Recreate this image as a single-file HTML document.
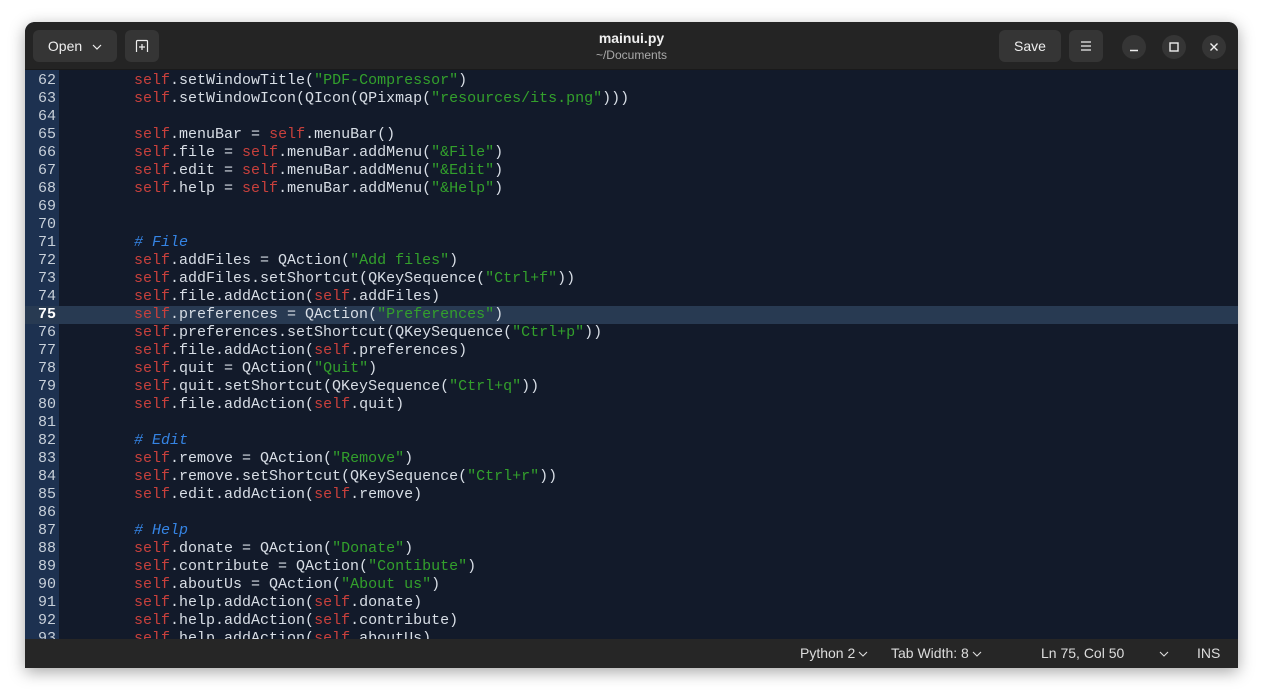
<!DOCTYPE html>
<html><head><meta charset="utf-8"><style>
*{margin:0;padding:0;box-sizing:border-box}
body{width:1263px;height:696px;background:#fff;position:relative;overflow:hidden;font-family:"Liberation Sans",sans-serif}
.win{position:absolute;left:25px;top:22px;width:1213px;height:646px;background:#121a2a;border-radius:10px 10px 0 0;overflow:hidden;box-shadow:0 4px 16px rgba(0,0,0,.35)}
.hdr{position:absolute;left:0;top:0;width:100%;height:48px;background:#242424;border-bottom:1px solid #1a1a1a}
.btn{position:absolute;top:8px;height:32px;background:#353535;border-radius:6px;color:#eee;font-size:14px;line-height:32px;text-align:center}
.circ{position:absolute;top:13px;width:24px;height:24px;border-radius:50%;background:#353535}
.title{position:absolute;left:0;width:100%;top:8px;text-align:center;color:#f0f0f0;font-weight:bold;font-size:14px}
.sub{position:absolute;left:0;width:100%;top:26px;text-align:center;color:#aaa;font-size:12px}
.gut{position:absolute;left:0;top:48px;width:34px;height:570px;background:#1d3150}
.code{position:absolute;left:0;top:50px;width:100%;font-family:"Liberation Mono",monospace;font-size:15px;color:#d8dee6}
.l{height:18px;line-height:18px;white-space:pre;position:relative}
.n{position:absolute;left:0;width:31px;text-align:right;color:#c8d0da}
.t{position:absolute;left:37px}
.hl{background:#283a52}
.hl .n{font-weight:bold;color:#fff}
.s{color:#c8403c}.g{color:#33a02c}.c{color:#3584e4;font-style:italic}
.st{position:absolute;left:0;top:617px;width:100%;height:29px;background:#262626;color:#ddd;font-size:14px;line-height:29px}
.st span{position:absolute}
.chev{display:inline-block;vertical-align:middle;margin-left:3px}
</style></head><body>
<div class="win">
<div class="hdr">
<div class="btn" style="left:8px;width:84px">Open <svg class="chev" width="10" height="8" viewBox="0 0 10 8" style="margin-left:6px"><path d="M1 2l4 4 4-4" stroke="#eee" stroke-width="1.2" fill="none"/></svg></div>
<div class="btn" style="left:100px;width:34px"><svg width="14" height="14" viewBox="0 0 14 14" style="margin-top:9px"><path d="M1.5 13V2.5Q1.5 1.5 2.5 1.5H11.5Q12.5 1.5 12.5 2.5V13M7 5v6M4 8h6" stroke="#eee" stroke-width="1.2" fill="none"/></svg></div>
<div class="title">mainui.py</div><div class="sub">~/Documents</div>
<div class="btn" style="left:974px;width:62px">Save</div>
<div class="btn" style="left:1044px;width:34px"><svg width="12" height="12" viewBox="0 0 12 12" style="margin-top:10px"><path d="M1 2h10M1 6h10M1 10h10" stroke="#eee" stroke-width="1.2"/></svg></div>
<div class="circ" style="left:1097px"><svg width="24" height="24"><path d="M8 15.5h8" stroke="#eee" stroke-width="1.4"/></svg></div>
<div class="circ" style="left:1137px"><svg width="24" height="24"><rect x="8" y="8" width="8" height="8" stroke="#eee" stroke-width="1.4" fill="none"/></svg></div>
<div class="circ" style="left:1177px"><svg width="24" height="24"><path d="M8.5 8.5l7 7M15.5 8.5l-7 7" stroke="#eee" stroke-width="1.4"/></svg></div>
</div>
<div class="gut"></div>
<div class="code">
<div class="l"><span class="n">62</span><span class="t">        <span class="s">self</span>.setWindowTitle(<span class="g">"PDF-Compressor"</span>)</span></div>
<div class="l"><span class="n">63</span><span class="t">        <span class="s">self</span>.setWindowIcon(QIcon(QPixmap(<span class="g">"resources/its.png"</span>)))</span></div>
<div class="l"><span class="n">64</span></div>
<div class="l"><span class="n">65</span><span class="t">        <span class="s">self</span>.menuBar = <span class="s">self</span>.menuBar()</span></div>
<div class="l"><span class="n">66</span><span class="t">        <span class="s">self</span>.file = <span class="s">self</span>.menuBar.addMenu(<span class="g">"&amp;File"</span>)</span></div>
<div class="l"><span class="n">67</span><span class="t">        <span class="s">self</span>.edit = <span class="s">self</span>.menuBar.addMenu(<span class="g">"&amp;Edit"</span>)</span></div>
<div class="l"><span class="n">68</span><span class="t">        <span class="s">self</span>.help = <span class="s">self</span>.menuBar.addMenu(<span class="g">"&amp;Help"</span>)</span></div>
<div class="l"><span class="n">69</span></div>
<div class="l"><span class="n">70</span></div>
<div class="l"><span class="n">71</span><span class="t">        <span class="c"># File</span></span></div>
<div class="l"><span class="n">72</span><span class="t">        <span class="s">self</span>.addFiles = QAction(<span class="g">"Add files"</span>)</span></div>
<div class="l"><span class="n">73</span><span class="t">        <span class="s">self</span>.addFiles.setShortcut(QKeySequence(<span class="g">"Ctrl+f"</span>))</span></div>
<div class="l"><span class="n">74</span><span class="t">        <span class="s">self</span>.file.addAction(<span class="s">self</span>.addFiles)</span></div>
<div class="l hl"><span class="n">75</span><span class="t">        <span class="s">self</span>.preferences = QAction(<span class="g">"Preferences"</span>)</span></div>
<div class="l"><span class="n">76</span><span class="t">        <span class="s">self</span>.preferences.setShortcut(QKeySequence(<span class="g">"Ctrl+p"</span>))</span></div>
<div class="l"><span class="n">77</span><span class="t">        <span class="s">self</span>.file.addAction(<span class="s">self</span>.preferences)</span></div>
<div class="l"><span class="n">78</span><span class="t">        <span class="s">self</span>.quit = QAction(<span class="g">"Quit"</span>)</span></div>
<div class="l"><span class="n">79</span><span class="t">        <span class="s">self</span>.quit.setShortcut(QKeySequence(<span class="g">"Ctrl+q"</span>))</span></div>
<div class="l"><span class="n">80</span><span class="t">        <span class="s">self</span>.file.addAction(<span class="s">self</span>.quit)</span></div>
<div class="l"><span class="n">81</span></div>
<div class="l"><span class="n">82</span><span class="t">        <span class="c"># Edit</span></span></div>
<div class="l"><span class="n">83</span><span class="t">        <span class="s">self</span>.remove = QAction(<span class="g">"Remove"</span>)</span></div>
<div class="l"><span class="n">84</span><span class="t">        <span class="s">self</span>.remove.setShortcut(QKeySequence(<span class="g">"Ctrl+r"</span>))</span></div>
<div class="l"><span class="n">85</span><span class="t">        <span class="s">self</span>.edit.addAction(<span class="s">self</span>.remove)</span></div>
<div class="l"><span class="n">86</span></div>
<div class="l"><span class="n">87</span><span class="t">        <span class="c"># Help</span></span></div>
<div class="l"><span class="n">88</span><span class="t">        <span class="s">self</span>.donate = QAction(<span class="g">"Donate"</span>)</span></div>
<div class="l"><span class="n">89</span><span class="t">        <span class="s">self</span>.contribute = QAction(<span class="g">"Contibute"</span>)</span></div>
<div class="l"><span class="n">90</span><span class="t">        <span class="s">self</span>.aboutUs = QAction(<span class="g">"About us"</span>)</span></div>
<div class="l"><span class="n">91</span><span class="t">        <span class="s">self</span>.help.addAction(<span class="s">self</span>.donate)</span></div>
<div class="l"><span class="n">92</span><span class="t">        <span class="s">self</span>.help.addAction(<span class="s">self</span>.contribute)</span></div>
<div class="l"><span class="n">93</span><span class="t">        <span class="s">self</span>.help.addAction(<span class="s">self</span>.aboutUs)</span></div>
</div>
<div class="st">
<span style="left:775px">Python 2<svg class="chev" width="10" height="8" viewBox="0 0 10 8"><path d="M1 2l4 4 4-4" stroke="#ddd" stroke-width="1.1" fill="none"/></svg></span>
<span style="left:866px">Tab Width: 8<svg class="chev" width="10" height="8" viewBox="0 0 10 8"><path d="M1 2l4 4 4-4" stroke="#ddd" stroke-width="1.1" fill="none"/></svg></span>
<span style="left:1016px">Ln 75, Col 50</span>
<span style="left:1131px"><svg class="chev" width="10" height="8" viewBox="0 0 10 8"><path d="M1 2l4 4 4-4" stroke="#ddd" stroke-width="1.1" fill="none"/></svg></span>
<span style="left:1172px">INS</span>
</div>
</div>
</body></html>
